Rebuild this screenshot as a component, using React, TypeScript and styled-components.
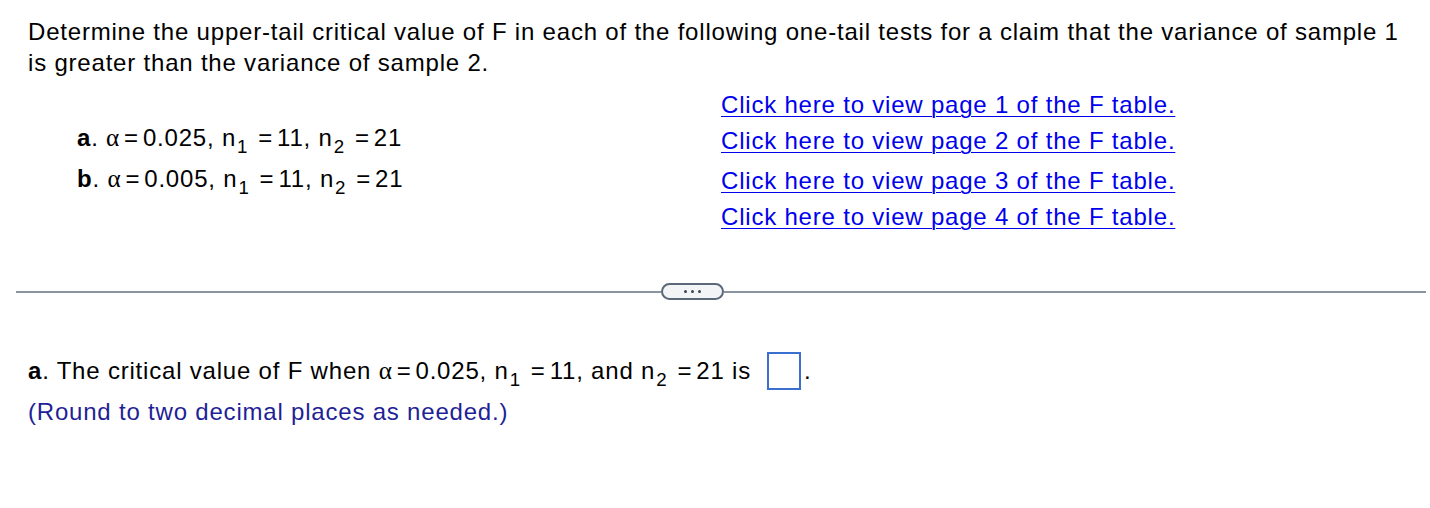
import React from 'react';
import styled, { createGlobalStyle } from 'styled-components';

const GlobalStyle = createGlobalStyle`
  html, body {
    margin: 0;
    padding: 0;
    background: #fff;
  }
  body {
    font-family: 'Liberation Sans', Arial, sans-serif;
    color: #000;
  }
`;

const Page = styled.div`
  width: 1430px;
  height: 508px;
  padding: 16px 4px 0 16px;
  box-sizing: border-box;
  font-size: 24px;
  letter-spacing: 0.8px;
`;

const Question = styled.div`
  padding-left: 12px;
`;

const Statement = styled.p`
  margin: 0;
  line-height: 31px;
`;

const TopRow = styled.div`
  display: flex;
  align-items: flex-start;
  margin-top: 9px;
`;

const PartList = styled.div`
  width: 693px;
  padding: 35px 0 0 49px;
  box-sizing: border-box;
  display: flex;
  flex-direction: column;
  gap: 10px;
`;

const PartLine = styled.div`
  white-space: nowrap;
  line-height: 31px;
`;

const Label = styled.b`
  font-weight: 700;
`;

const Alpha = styled.span`
  font-family: 'Liberation Serif', 'Times New Roman', serif;
  font-size: 1.05em;
`;

const Eq = styled.span<{ $wide?: boolean }>`
  margin: ${(p) => (p.$wide ? '0 4px 0 10px' : '0 4px')};
`;

const Sub = styled.sub`
  font-size: 0.78em;
  line-height: 0;
  vertical-align: -0.35em;
  margin-left: 1px;
`;

const Links = styled.div`
  display: flex;
  flex-direction: column;
  gap: 4px;
`;

const LinkGroup = styled.div`
  display: flex;
  flex-direction: column;
`;

const TableLink = styled.a`
  color: #0000ee;
  text-decoration: underline;
  text-underline-offset: 3px;
  text-decoration-thickness: 1px;
  line-height: 36px;
  white-space: nowrap;
  cursor: pointer;
`;

const Divider = styled.div`
  display: flex;
  align-items: center;
  margin-top: 48px;
  height: 17px;
`;

const Rule = styled.div<{ $width?: number }>`
  height: 2px;
  background: #8a93a0;
  ${(p) => (p.$width ? `width: ${p.$width}px;` : 'flex: 1;')}
`;

const Pill = styled.div`
  width: 63px;
  height: 17px;
  box-sizing: border-box;
  border: 2px solid #5a6878;
  border-radius: 9px;
  background: #f3f4f6;
  display: flex;
  align-items: center;
  justify-content: center;
  gap: 4px;
`;

const Dot = styled.span`
  width: 3px;
  height: 3px;
  border-radius: 50%;
  background: #3c4654;
`;

const Answer = styled.div`
  padding-left: 12px;
  margin-top: 52px;
`;

const AnswerLine = styled.div`
  line-height: 38px;
  white-space: nowrap;
`;

const InputBox = styled.span`
  display: inline-block;
  width: 34px;
  height: 38px;
  box-sizing: border-box;
  border: 2px solid #3a6fd0;
  margin-left: 16px;
  margin-right: 3px;
  vertical-align: middle;
  position: relative;
  top: -2px;
`;

const Hint = styled.div`
  color: #1f1f96;
  line-height: 40px;
`;

const N = ({ i }: { i: string }) => (
  <>
    n<Sub>{i}</Sub>
  </>
);

const Part = ({ label, alpha }: { label: string; alpha: string }) => (
  <PartLine>
    <Label>{label}</Label>. <Alpha>α</Alpha>
    <Eq>=</Eq>
    {alpha}, <N i="1" />
    <Eq $wide>=</Eq>11, <N i="2" />
    <Eq $wide>=</Eq>21
  </PartLine>
);

const App = () => {
  return (
    <Page>
      <GlobalStyle />
      <Question>
        <Statement>
          Determine the upper-tail critical value of F in each of the following one-tail tests for a claim that the variance of sample 1
          <br />
          is greater than the variance of sample 2.
        </Statement>
        <TopRow>
          <PartList>
            <Part label="a" alpha="0.025" />
            <Part label="b" alpha="0.005" />
          </PartList>
          <Links>
            <LinkGroup>
              <TableLink>Click here to view page 1 of the F table.</TableLink>
              <TableLink>Click here to view page 2 of the F table.</TableLink>
            </LinkGroup>
            <LinkGroup>
              <TableLink>Click here to view page 3 of the F table.</TableLink>
              <TableLink>Click here to view page 4 of the F table.</TableLink>
            </LinkGroup>
          </Links>
        </TopRow>
      </Question>

      <Divider>
        <Rule $width={645} />
        <Pill>
          <Dot />
          <Dot />
          <Dot />
        </Pill>
        <Rule />
      </Divider>

      <Answer>
        <AnswerLine>
          <Label>a</Label>. The critical value of F when <Alpha>α</Alpha>
          <Eq>=</Eq>0.025, <N i="1" />
          <Eq $wide>=</Eq>11, and <N i="2" />
          <Eq $wide>=</Eq>21 is
          <InputBox />.
        </AnswerLine>
        <Hint>(Round to two decimal places as needed.)</Hint>
      </Answer>
    </Page>
  );
};

export default App;
